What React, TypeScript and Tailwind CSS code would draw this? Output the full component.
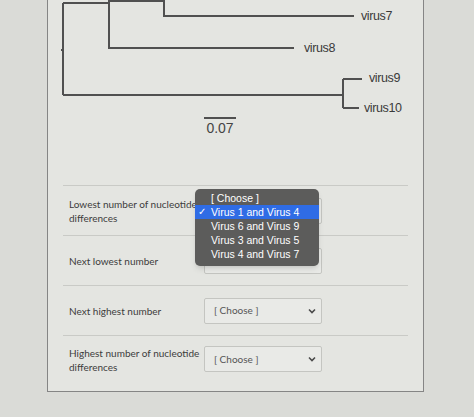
import React from 'react';

const labelFont = { fontFamily: 'Lato, "Open Sans", sans-serif' };
const sysFont = { fontFamily: '"Liberation Sans", Arial, sans-serif' };

function Chevron() {
  return (
    <svg width="8" height="6" viewBox="0 0 8 6" className="shrink-0">
      <path d="M1 1.5 L4 4.5 L7 1.5" fill="none" stroke="#4a4a4a" strokeWidth="1.6" />
    </svg>
  );
}

function SelectBox() {
  return (
    <div className="flex h-[26px] w-[118px] items-center justify-between rounded-[2px] border border-[#c4c5c1] bg-[#e9eae7] pl-[9px] pr-[5px]">
      <span className="text-[10px] text-[#555]" style={labelFont}>[ Choose ]</span>
      <Chevron />
    </div>
  );
}

const options = ['[ Choose ]', 'Virus 1 and Virus 4', 'Virus 6 and Virus 9', 'Virus 3 and Virus 5', 'Virus 4 and Virus 7'];

function Menu() {
  return (
    <div className="absolute left-[-9px] top-[-9px] z-10 w-[124px] rounded-[5px] bg-[#5c5c5b] pb-[5px] pt-[2px] shadow-md" style={sysFont}>
      {options.map((o, i) => (
        <div
          key={o}
          className={`flex h-[14px] items-center text-[10.5px] font-medium leading-[14px] text-white ${i === 1 ? 'bg-[#2f6ce5]' : ''}`}
        >
          <span className="w-[16px] pl-[3px] text-[10px]">{i === 1 ? '✓' : ''}</span>
          <span>{o}</span>
        </div>
      ))}
    </div>
  );
}

function Tree() {
  const s = { stroke: '#505050', strokeWidth: 2, fill: 'none' };
  const t = { fill: '#3a3a3a', fontSize: 12.5, letterSpacing: -0.4, fontFamily: '"Liberation Sans", Arial, sans-serif' };
  return (
    <svg width="377" height="150" viewBox="0 0 377 150" className="block">
      <path d="M13 50 H15 M15 3 V95 M15 3 H61 M61 -2 V48 H246" {...s} />
      <path d="M61 1 H116 M116 -2 V16 H306" {...s} />
      <path d="M15 95 H295 M295 79 V108 M295 79 H314 M295 108 H311" {...s} />
      <text x="313" y="20" {...t}>virus7</text>
      <text x="256" y="52" {...t}>virus8</text>
      <text x="321" y="82" {...t}>virus9</text>
      <text x="316" y="112" {...t}>virus10</text>
      <path d="M156 118 H188" {...s} />
      <text x="172" y="133" textAnchor="middle" fill="#444" fontSize="14" fontFamily='"Liberation Sans", Arial, sans-serif'>0.07</text>
    </svg>
  );
}

type Row = { label: string; open?: boolean; tall?: boolean };

const rows: Row[] = [
  { label: 'Lowest number of nucleotide differences', open: true },
  { label: 'Next lowest number' },
  { label: 'Next highest number' },
  { label: 'Highest number of nucleotide differences', tall: true },
];

export default function App() {
  return (
    <div className="h-[417px] w-[474px] overflow-hidden bg-[#dadbd7]">
      <div className="ml-[47px] w-[377px] border-x border-b border-[#858585] bg-[#e4e5e1]">
        <Tree />
        <div className="px-[15px] pt-[35px]">
          {rows.map((r) => (
            <div
              key={r.label}
              className={`flex border-t border-[#c9cac6] ${r.tall ? 'h-[56px] items-start pt-[10px]' : 'h-[50px] items-center'}`}
            >
              <div className="w-[141px] pl-[6px] pr-[4px] text-[10px] leading-[14px] text-[#3c3c3c]" style={labelFont}>
                {r.label}
              </div>
              <div className="relative">
                <SelectBox />
                {r.open && <Menu />}
              </div>
            </div>
          ))}
        </div>
      </div>
    </div>
  );
}
